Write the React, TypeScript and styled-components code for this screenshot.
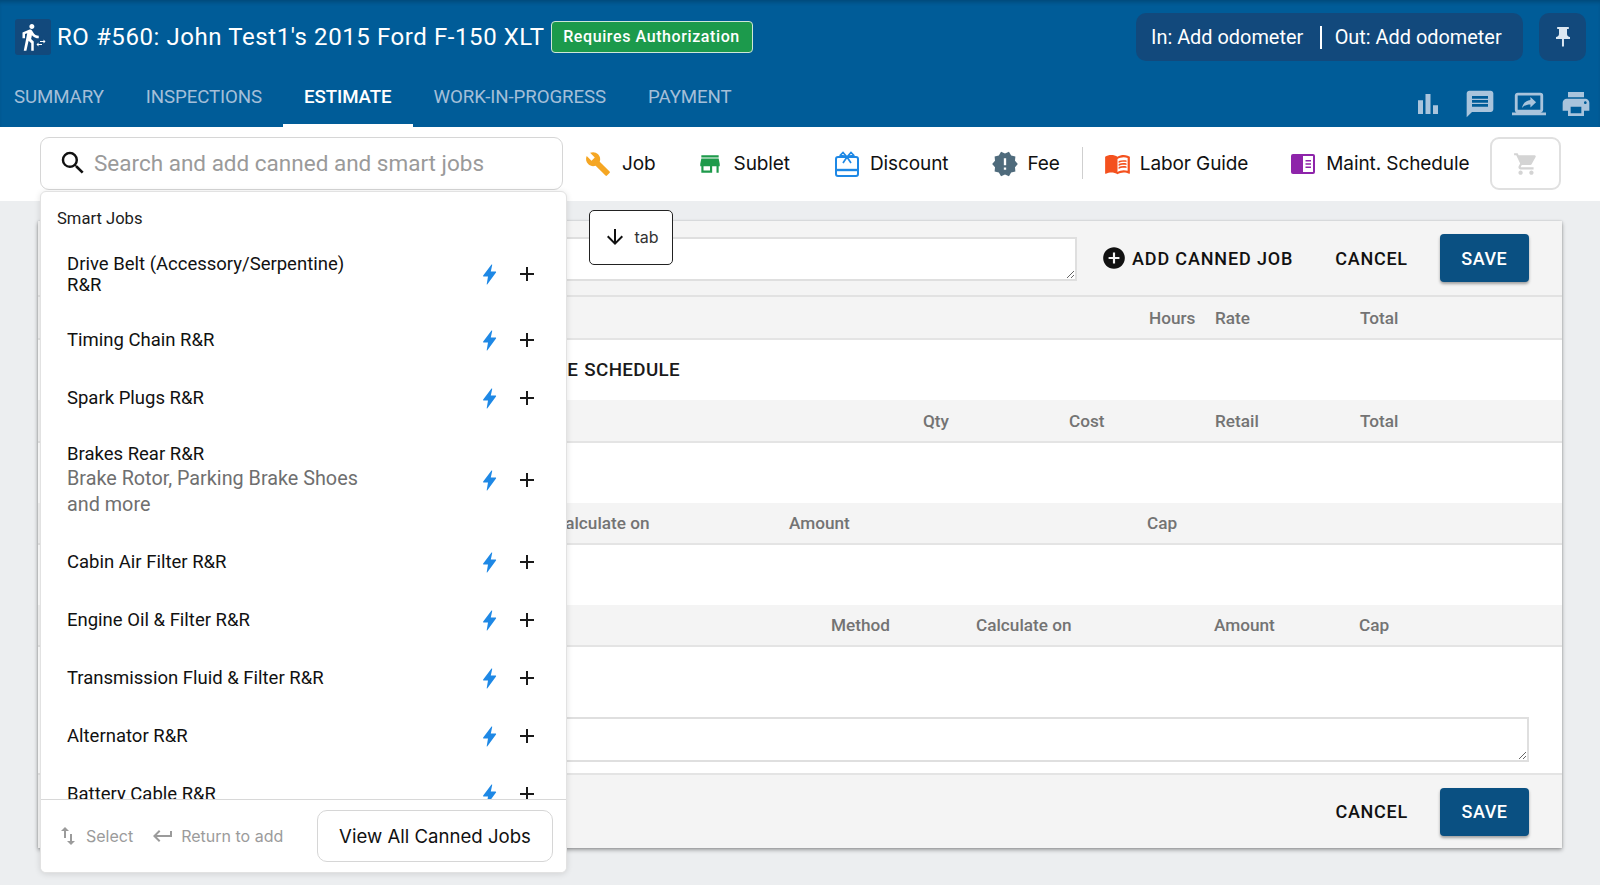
import React from "react";
import styled, { createGlobalStyle } from "styled-components";
import {
  MdArrowDownward, MdAddCircle, MdBarChart, MdBuild, MdDirectionsWalk, MdKeyboardReturn, MdMenuBook,
  MdMessage, MdNewReleases, MdOutlineScreenShare, MdPrint, MdPushPin, MdSearch, MdShoppingCart,
  MdStore, MdSwapHoriz, MdSwapVert, MdAdd,
} from "react-icons/md";

const Global = createGlobalStyle`
  html, body { margin: 0; padding: 0; background: #eceef0; }
  * { box-sizing: border-box; }
  body { font-family: Roboto, "Liberation Sans", sans-serif; color: #111; }
`;

const Page = styled.div`
  width: 1600px; height: 885px; overflow: hidden; display: flex; flex-direction: column; background: #eceef0;
`;
const Header = styled.header`
  height: 127px; flex: none; background: #005c98; color: #fff; display: flex; flex-direction: column;
  box-shadow: inset 0 4px 4px -2px rgba(0,0,0,.22);
`;
const TopRow = styled.div`
  height: 72px; display: flex; align-items: center; padding: 0 14px 0 15px;
`;
const Avatar = styled.div`
  position: relative; width: 36px; height: 36px; background: #12497c; border-radius: 3px; margin-right: 6px; margin-top: 1px;
  color: #fff; display: flex; align-items: center;
`;
const SwapBadge = styled.span`
  position: absolute; right: 4px; bottom: 6px; display: flex; line-height: 0;
`;
const Title = styled.h1`
  margin: 2px 0 0; font-size: 24px; font-weight: 400; letter-spacing: .58px; white-space: nowrap;
`;
const Chip = styled.span`
  margin: 1px 0 0 6px; height: 32px; width: 202px; display: flex; align-items: center; justify-content: center;
  background: #1c9a4c; border: 1px solid #cfe6d8; border-radius: 4px; font-size: 16px; font-weight: 500; letter-spacing: .6px; white-space: nowrap;
`;
const Spacer = styled.div` flex: 1; `;
const Odometer = styled.div`
  width: 387px; height: 48px; background: #12497c; border-radius: 10px; margin-top: 2px;
  display: flex; align-items: center; padding-left: 15px; font-size: 19.9px; white-space: nowrap;
`;
const OdoSep = styled.span`
  width: 1.5px; height: 23px; background: #fff; margin: 0 13px 0 17px;
`;
const PinBox = styled.div`
  width: 47px; height: 48px; background: #12497c; border-radius: 10px; margin: 2px 0 0 16px;
  display: flex; align-items: center; justify-content: center; color: #dce8f2;
`;
const TabRow = styled.nav`
  height: 55px; display: flex; align-items: stretch; padding-right: 8px;
`;
const Tab = styled.div<{ $active?: boolean }>`
  display: flex; align-items: center; padding: 0 21px 2px; font-size: 18.7px; font-weight: ${p => (p.$active ? 500 : 400)};
  color: ${p => (p.$active ? "#fff" : "#a4bfd8")}; border-bottom: 3px solid ${p => (p.$active ? "#fff" : "transparent")};
  text-transform: uppercase; letter-spacing: -.1px; white-space: nowrap;
  &:first-child { padding-left: 14px; }
`;
const HeaderIcons = styled.div`
  margin-left: auto; display: flex; align-items: center; gap: 16px; color: #a9c4dc; padding-top: 8px;
`;
const BarsIcon = styled(MdBarChart)` margin-right: 5px; `;
const LaptopIcon = styled(MdOutlineScreenShare)` margin-right: -2px; `;
const Toolbar = styled.div`
  height: 74px; flex: none; background: #fff; display: flex; align-items: flex-start; padding: 10px 39px 0 40px; font-family: Inter, sans-serif;
`;
const SearchWrap = styled.div` position: relative; width: 523px; flex: none; `;
const SearchBox = styled.div`
  height: 53px; border: 1px solid #d6d6d6; border-radius: 9px; display: flex; align-items: center; padding: 0 0 1px 17px; gap: 6px;
  font-size: 22.5px; color: #9a9a9a; font-family: Roboto, sans-serif; white-space: nowrap;
  svg { color: #111; }
`;
const ToolItem = styled.div<{ $pl?: number; $pr?: number; $gap?: number }>`
  flex: none; height: 53px; padding: 0 ${p => p.$pr ?? 21}px 0 ${p => p.$pl ?? 22}px; display: flex; align-items: center;
  gap: ${p => p.$gap ?? 11}px; font-size: 19px; letter-spacing: -.1px; white-space: nowrap; font-weight: 400;
`;
const ToolDivider = styled.div` flex: none; width: 1px; height: 32px; background: #cfcfcf; margin-top: 10px; `;
const CartBox = styled.div`
  flex: none; width: 71px; height: 53px; border: 2px solid #e0e0e0; border-radius: 9px; margin-left: auto; color: #d4d4d4;
  display: flex; align-items: center; justify-content: center;
`;
const Panel = styled.div`
  position: absolute; z-index: 3; left: 0; top: 54px; width: 527px; height: 682px; background: #fff; border: 1px solid #e2e2e2; border-radius: 6px;
  box-shadow: 0 1px 6px rgba(0,0,0,.12); display: flex; flex-direction: column; overflow: hidden;
`;
const ListArea = styled.div` flex: 1; min-height: 0; overflow: hidden; font-family: Roboto, sans-serif; `;
const SectionTitle = styled.div`
  font-size: 16.6px; height: 45px; line-height: 54px; padding-left: 16px; color: #1b1b1b; font-family: Roboto, sans-serif;
`;
const JobRow = styled.div<{ $h: number }>`
  height: ${p => p.$h}px; display: flex; align-items: center; padding: 0 27px 0 26px; color: #111;
`;
const JobText = styled.div` width: 320px; padding-top: 2px; font-size: 18.5px; line-height: 21.5px; white-space: nowrap; `;
const JobSub = styled.div` color: #6f6f6f; font-size: 19.8px; line-height: 26px; `;
const RowActions = styled.div` margin-left: auto; display: flex; align-items: center; gap: 18px; color: #1a1a1a; `;
const PanelFooter = styled.div`
  height: 73px; flex: none; border-top: 1px solid #d8d8d8; display: flex; align-items: center; padding: 0 13px 0 15px; font-family: Inter, sans-serif;
  background: #fff;
`;
const Hint = styled.div`
  display: flex; align-items: center; gap: 6px; color: #9b9b9b; font-size: 16px; margin-right: 18px; white-space: nowrap;
`;
const ViewAll = styled.button`
  margin-left: auto; width: 236px; height: 52px; background: #fff; border: 1px solid #d6d6d6; border-radius: 10px; padding: 0;
  font: 400 18.6px Inter, sans-serif; color: #111; white-space: nowrap;
`;
const TabHint = styled.div`
  position: absolute; z-index: 4; left: 549px; top: 73px; width: 84px; height: 55px; background: #fff; border: 1px solid #222; border-radius: 5px;
  display: flex; align-items: center; justify-content: center; gap: 7px; padding-bottom: 1px; font-size: 16px; color: #333; font-family: Inter, sans-serif;
`;
const Main = styled.main` flex: 1; padding: 20px 38px 37px 38px; `;
const Card = styled.section`
  height: 627px; background: #fff; display: flex; flex-direction: column; box-shadow: 0 2px 4px rgba(0,0,0,.35), 0 0 2px rgba(0,0,0,.15);
`;
const CardTop = styled.div`
  height: 76px; flex: none; background: #f4f4f4; display: flex; align-items: center; padding: 0 33px 0 30px; border-bottom: 2px solid #e2e2e2;
`;
const NoteField = styled.textarea`
  display: block; border: 2px solid #dfdfdf; background: #fff; resize: both; outline: none; padding: 0; margin: 0;
`;
const TopNote = styled(NoteField)` flex: none; width: 1009px; height: 44px; margin-top: 1px; `;
const AddCanned = styled.div`
  margin-left: 24px; display: flex; align-items: center; gap: 5px; font-size: 18px; font-weight: 500; letter-spacing: .85px; white-space: nowrap;
`;
const TextBtn = styled.div` font-size: 18px; font-weight: 500; letter-spacing: .75px; `;
const CancelTop = styled(TextBtn)` margin-left: 42px; `;
const SaveBtn = styled.div`
  margin-left: 32px; width: 89px; height: 48px; border-radius: 4px; background: #0a5082; color: #fff; font-size: 18px; font-weight: 500; letter-spacing: .5px;
  display: flex; align-items: center; justify-content: center; box-shadow: 0 2px 3px rgba(0,0,0,.35);
`;
const ColRow = styled.div<{ $cols: string; $h: number }>`
  height: ${p => p.$h}px; flex: none; background: #f4f4f4; border-bottom: 2px solid #e4e4e4; display: grid; align-items: center;
  grid-template-columns: ${p => p.$cols}; font-size: 17.2px; font-weight: 500; color: #737373; white-space: nowrap;
`;
const BlankRow = styled.div<{ $h: number }>`
  height: ${p => p.$h}px; flex: none; background: #fff; display: flex; align-items: center; font-size: 18.8px; font-weight: 500; color: #1a1a1a;
`;
const SectionName = styled.div` width: 642px; text-align: right; white-space: nowrap; letter-spacing: .35px; word-spacing: 1px; `;
const NoteRow = styled.div`
  flex: 1; background: #fff; padding: 70px 33px 0 30px;
`;
const BottomNote = styled(NoteField)` width: 100%; height: 45px; `;
const CardBottom = styled.div`
  height: 75px; flex: none; background: #f4f4f4; border-top: 2px solid #e4e4e4; display: flex; align-items: center; justify-content: flex-end; padding: 0 33px 0 0;
`;

const Bolt = () => (
  <svg width="15" height="21" viewBox="0 0 15 21" aria-hidden="true">
    <path d="M9.5 .6 1.2 11.6c-.3.5 0 1 .5 1H6L4.7 20.2c0 .3.3.4.5.2L14 8.6c.3-.5 0-1-.5-1H8.8L10.2.9c0-.5-.4-.6-.7-.3z" fill="#1e88e5" />
  </svg>
);
const GiftIcon = () => (
  <svg width="24" height="26" viewBox="0 0 24 26" aria-hidden="true" fill="none" stroke="#1e88e5" strokeWidth="2">
    <rect x="1" y="6" width="22" height="19" rx="2" />
    <path d="M1 19h22" strokeWidth="2.4" />
    <path d="M8 12 12 6l4 6M12 6 8 1.5 5.5 4 12 6l6.5-2L16 1.5z" strokeWidth="1.7" />
  </svg>
);
const BookIcon = () => (
  <svg width="24" height="22" viewBox="0 0 24 22" aria-hidden="true">
    <rect x="0" y="1" width="24" height="20" rx="2" fill="#8e24aa" />
    <rect x="12" y="3" width="10" height="16" fill="#fff" />
    <path d="M14.5 7h5.5v1.4h-5.5zM14.5 10.3h5.5v1.4h-5.5zM14.5 13.6h5.5V15h-5.5z" fill="#8e24aa" />
  </svg>
);

type Job = { t: string[]; sub?: string[]; h: number };
const jobs: Job[] = [
  { t: ["Drive Belt (Accessory/Serpentine)", "R&R"], h: 74 },
  { t: ["Timing Chain R&R"], h: 58 },
  { t: ["Spark Plugs R&R"], h: 58 },
  { t: ["Brakes Rear R&R"], sub: ["Brake Rotor, Parking Brake Shoes", "and more"], h: 106 },
  { t: ["Cabin Air Filter R&R"], h: 58 },
  { t: ["Engine Oil & Filter R&R"], h: 58 },
  { t: ["Transmission Fluid & Filter R&R"], h: 58 },
  { t: ["Alternator R&R"], h: 58 },
  { t: ["Battery Cable R&R"], h: 58 },
];

export default function App() {
  return (
    <Page>
      <Global />
      <Header>
        <TopRow>
          <Avatar>
            <MdDirectionsWalk size={30} />
            <SwapBadge><MdSwapHoriz size={12} /></SwapBadge>
          </Avatar>
          <Title>RO #560: John Test1's 2015 Ford F-150 XLT</Title>
          <Chip>Requires Authorization</Chip>
          <Spacer />
          <Odometer>In: Add odometer<OdoSep />Out: Add odometer</Odometer>
          <PinBox><MdPushPin size={24} /></PinBox>
        </TopRow>
        <TabRow>
          <Tab>Summary</Tab>
          <Tab>Inspections</Tab>
          <Tab $active>Estimate</Tab>
          <Tab>Work-in-progress</Tab>
          <Tab>Payment</Tab>
          <HeaderIcons>
            <BarsIcon size={30} />
            <MdMessage size={32} />
            <LaptopIcon size={34} />
            <MdPrint size={32} />
          </HeaderIcons>
        </TabRow>
      </Header>
      <Toolbar>
        <SearchWrap>
          <SearchBox><MdSearch size={30} />Search and add canned and smart jobs</SearchBox>
          <Panel>
            <ListArea>
              <SectionTitle>Smart Jobs</SectionTitle>
              {jobs.map(j => (
                <JobRow key={j.t[0]} $h={j.h}>
                  <JobText>
                    {j.t.map(l => <div key={l}>{l}</div>)}
                    {j.sub && <JobSub>{j.sub.map(l => <div key={l}>{l}</div>)}</JobSub>}
                  </JobText>
                  <RowActions><Bolt /><MdAdd size={24} /></RowActions>
                </JobRow>
              ))}
            </ListArea>
            <PanelFooter>
              <Hint><MdSwapVert size={24} />Select</Hint>
              <Hint><MdKeyboardReturn size={24} />Return to add</Hint>
              <ViewAll>View All Canned Jobs</ViewAll>
            </PanelFooter>
          </Panel>
          <TabHint><MdArrowDownward size={24} color="#111" />tab</TabHint>
        </SearchWrap>
        <ToolItem $pr={19}><MdBuild size={26} color="#f5a623" />Job</ToolItem>
        <ToolItem $pr={23}><MdStore size={26} color="#1e9a4b" />Sublet</ToolItem>
        <ToolItem><GiftIcon />Discount</ToolItem>
        <ToolItem $gap={8} $pr={22}><MdNewReleases size={28} color="#4f6b7c" />Fee</ToolItem>
        <ToolDivider />
        <ToolItem $pl={21} $gap={9}><MdMenuBook size={27} color="#f4511e" />Labor Guide</ToolItem>
        <ToolItem><BookIcon />Maint. Schedule</ToolItem>
        <CartBox><MdShoppingCart size={26} /></CartBox>
      </Toolbar>
      <Main>
        <Card>
          <CardTop>
            <TopNote />
            <AddCanned><MdAddCircle size={26} />ADD CANNED JOB</AddCanned>
            <CancelTop>CANCEL</CancelTop>
            <SaveBtn>SAVE</SaveBtn>
          </CardTop>
          <ColRow $h={43} $cols="1111px 66px 145px 1fr"><span /><span>Hours</span><span>Rate</span><span>Total</span></ColRow>
          <BlankRow $h={60}><SectionName>MAINTENANCE SCHEDULE</SectionName></BlankRow>
          <ColRow $h={43} $cols="885px 146px 146px 145px 1fr"><span /><span>Qty</span><span>Cost</span><span>Retail</span><span>Total</span></ColRow>
          <BlankRow $h={60} />
          <ColRow $h={42} $cols="516px 235px 358px 1fr"><span /><span>Calculate on</span><span>Amount</span><span>Cap</span></ColRow>
          <BlankRow $h={60} />
          <ColRow $h={42} $cols="793px 145px 238px 145px 1fr"><span /><span>Method</span><span>Calculate on</span><span>Amount</span><span>Cap</span></ColRow>
          <NoteRow><BottomNote /></NoteRow>
          <CardBottom>
            <TextBtn>CANCEL</TextBtn>
            <SaveBtn>SAVE</SaveBtn>
          </CardBottom>
        </Card>
      </Main>
    </Page>
  );
}
